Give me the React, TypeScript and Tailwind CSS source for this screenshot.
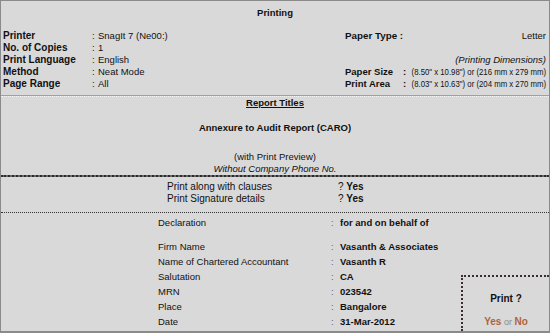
import React from "react";

const font = { fontFamily: '"Liberation Sans", Arial, sans-serif' };

function LRow({ label, value }: { label: string; value: string }) {
  return (
    <div className="flex h-[12px] items-center leading-[12px]">
      <span className="w-[89px] text-[10px] font-bold">{label}</span>
      <span className="w-[6px]">:</span>
      <span>{value}</span>
    </div>
  );
}

function SigRow({ label, value }: { label: string; value: string }) {
  return (
    <div className="flex h-[15px] items-center leading-[15px]">
      <span className="w-[173px]">{label}</span>
      <span className="w-[9px] text-[#666]">:</span>
      <span className="font-bold">{value}</span>
    </div>
  );
}

function Dim({ label, value }: { label: string; value: string }) {
  return (
    <div className="flex h-[12px] items-center leading-[12px]">
      <span className="w-[58px] shrink-0 font-bold">{label}</span>
      <span className="w-[8px] shrink-0 font-bold">:</span>
      <span className="flex min-w-0 flex-1 justify-end">
        <span className="inline-block shrink-0 origin-right scale-x-[0.82] whitespace-nowrap">{value}</span>
      </span>
    </div>
  );
}

export default function App() {
  return (
    <div
      className="relative h-[333px] w-[550px] overflow-hidden border-x border-t border-b-2 border-[#8a8a8a] bg-[#d9d9d9] text-[9.5px] text-[#111]"
      style={font}
    >
      {/* Section 1 */}
      <div className="h-[94px]">
        <div className="pt-[6px] text-center font-bold leading-[12px]">Printing</div>
        <div className="mt-[11px] flex justify-between pl-[2px] pr-[3px]">
          <div className="flex flex-col">
            <LRow label="Printer" value="SnagIt 7 (Ne00:)" />
            <LRow label="No. of Copies" value="1" />
            <LRow label="Print Language" value="English" />
            <LRow label="Method" value="Neat Mode" />
            <LRow label="Page Range" value="All" />
          </div>
          <div className="flex w-[201px] flex-col">
            <div className="flex h-[12px] items-center justify-between leading-[12px]">
              <span className="text-[9.8px] font-bold">Paper Type :</span>
              <span>Letter</span>
            </div>
            <div className="h-[12px]" />
            <div className="h-[12px] text-right italic leading-[12px]">(Printing Dimensions)</div>
            <Dim label="Paper Size" value={'(8.50" x 10.98") or (216 mm x 279 mm)'} />
            <Dim label="Print Area" value={'(8.03" x 10.63") or (204 mm x 270 mm)'} />
          </div>
        </div>
      </div>
      <div className="h-[1px] bg-[#a0a0a0]" />
      <div className="h-[1px] border-b border-dotted border-[#f4f4f4]" />

      {/* Section 2 */}
      <div className="h-[78px]">
        <div className="text-center leading-[12px]">
          <span className="font-bold underline">Report Titles</span>
        </div>
        <div className="mt-[13px] text-center font-bold leading-[12px]">Annexure to Audit Report (CARO)</div>
        <div className="mt-[17px] text-center leading-[12px]">(with Print Preview)</div>
        <div className="text-center italic leading-[12px]">Without Company Phone No.</div>
      </div>
      <div className="h-[2px] bg-[#6a6a6a]">
        <div className="h-[2px] border-t-2 border-dotted border-[#2e2a2a]" />
      </div>

      {/* Section 3 */}
      <div className="h-[35px] pl-[166px] pt-[4px] text-[10px]">
        <div className="flex h-[12px] items-center leading-[12px]">
          <span className="w-[171px]">Print along with clauses</span>
          <span>? <span className="font-bold">Yes</span></span>
        </div>
        <div className="flex h-[12px] items-center leading-[12px]">
          <span className="w-[171px]">Print Signature details</span>
          <span>? <span className="font-bold">Yes</span></span>
        </div>
      </div>
      <div className="h-[1px] border-t border-dotted border-[#333]" />

      {/* Section 4 */}
      <div className="pl-[157px] pt-[2px]">
        <SigRow label="Declaration" value="for and on behalf of" />
        <div className="h-[9px]" />
        <SigRow label="Firm Name" value="Vasanth & Associates" />
        <SigRow label="Name of Chartered Accountant" value="Vasanth R" />
        <SigRow label="Salutation" value="CA" />
        <SigRow label="MRN" value="023542" />
        <SigRow label="Place" value="Bangalore" />
        <SigRow label="Date" value="31-Mar-2012" />
      </div>

      {/* Print? dialog */}
      <div className="absolute bottom-0 right-0 flex h-[56px] w-[88px] flex-col items-center border-l-2 border-t-2 border-dotted border-[#3a2e2e] bg-[#d9d9d9]">
        <div className="mt-[16px] text-[10px] font-bold leading-[12px]">Print ?</div>
        <div className="mt-[11px] text-[10px] leading-[12px]">
          <span className="font-bold text-[#b0653a]">Yes</span>
          <span className="text-[9px] text-[#8a8a8a]"> or </span>
          <span className="font-bold text-[#b0653a]">No</span>
        </div>
      </div>
    </div>
  );
}
